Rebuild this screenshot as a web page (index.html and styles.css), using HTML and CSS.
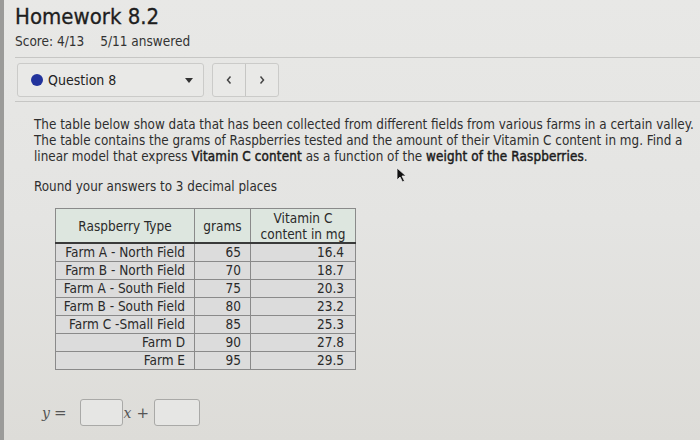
FILE: index.html
```html
<!DOCTYPE html>
<html>
<head>
<meta charset="utf-8">
<link rel="stylesheet" href="styles.css">
</head>
<body>
<div class="page">
  <header class="head">
    <h1 class="title">Homework 8.2</h1>
    <div class="score"><span>Score: 4/13</span><span>5/11 answered</span></div>
  </header>
  <div class="navbar">
    <div class="qselect">
      <span class="dot"></span>
      <span class="qlabel">Question 8</span>
      <span class="caret"></span>
    </div>
    <div class="pager">
      <span class="pbtn"><svg width="8" height="12" viewBox="0 0 8 12"><path d="M5.5 2.5 L2.5 6 L5.5 9.5" fill="none" stroke="#444" stroke-width="1.5"/></svg></span>
      <span class="pbtn"><svg width="8" height="12" viewBox="0 0 8 12"><path d="M2.5 2.5 L5.5 6 L2.5 9.5" fill="none" stroke="#444" stroke-width="1.5"/></svg></span>
    </div>
  </div>
  <main class="question">
    <p class="text">The table below show data that has been collected from different fields from various farms in a certain valley. The table contains the grams of Raspberries tested and the amount of their Vitamin C content in mg. Find a linear model that express <strong class="em">Vitamin C content</strong> as a function of the <strong class="em">weight of the Raspberries</strong>.</p>
    <p class="round">Round your answers to 3 decimal places</p>
    <table class="data">
      <thead>
        <tr><th class="c1">Raspberry Type</th><th class="c2">grams</th><th class="c3">Vitamin C<br>content in mg</th></tr>
      </thead>
      <tbody>
        <tr><td>Farm A - North Field</td><td>65</td><td>16.4</td></tr>
        <tr><td>Farm B - North Field</td><td>70</td><td>18.7</td></tr>
        <tr><td>Farm A - South Field</td><td>75</td><td>20.3</td></tr>
        <tr><td>Farm B - South Field</td><td>80</td><td>23.2</td></tr>
        <tr><td>Farm C -Small Field</td><td>85</td><td>25.3</td></tr>
        <tr><td>Farm D</td><td>90</td><td>27.8</td></tr>
        <tr><td>Farm E</td><td>95</td><td>29.5</td></tr>
      </tbody>
    </table>
    <div class="equation">
      <span class="math">y</span><span class="op">=</span>
      <span class="box b1"></span>
      <span class="math x">x</span><span class="op plus">+</span>
      <span class="box b2"></span>
    </div>
  </main>
  <svg class="cursor" width="12" height="16" viewBox="0 0 12 16"><path d="M1 1 L1 13 L4 10 L6.5 15 L8.5 14 L6 9 L10 9 Z" fill="#111" stroke="#eee" stroke-width="0.8"/></svg>
</div>
</body>
</html>
```
FILE: styles.css
```css
html, body {
  margin: 0;
  padding: 0;
}
body {
  width: 700px;
  height: 440px;
  overflow: hidden;
  background: linear-gradient(180deg, #e8e8e6 0%, #e4e4e2 50%, #dddcd8 100%);
  font-family: "DejaVu Sans Condensed", "DejaVu Sans", sans-serif;
  color: #2b2b2b;
}
.page {
  position: relative;
  height: 440px;
  border-left: 4px solid #9b9b99;
  box-sizing: border-box;
}
.head {
  padding: 3px 0 0 11px;
}
.title {
  margin: 0;
  font-size: 22px;
  font-weight: normal;
  line-height: 28px;
  color: #1e1e1e;
  -webkit-text-stroke: 0.3px #1e1e1e;
}
.score {
  display: flex;
  gap: 16px;
  font-size: 13.5px;
  line-height: 21px;
  color: #333;
  padding-bottom: 5px;
  border-bottom: 1px solid #c6c6c4;
}
.navbar {
  display: flex;
  gap: 8px;
  margin-left: 11px;
  padding: 5px 0 4px 2px;
  border-bottom: 1px solid #c6c6c4;
}
.qselect {
  width: 187px;
  height: 34px;
  box-sizing: border-box;
  border: 1px solid #cbcbc9;
  border-radius: 3px;
  background: #e9e9e7;
  display: flex;
  align-items: center;
  padding-left: 13px;
}
.dot {
  width: 12px;
  height: 12px;
  border-radius: 50%;
  background: #22339c;
}
.qlabel {
  margin-left: 5px;
  font-size: 14px;
  color: #222;
}
.caret {
  margin-left: auto;
  margin-right: 10px;
  width: 0;
  height: 0;
  border-left: 4px solid transparent;
  border-right: 4px solid transparent;
  border-top: 5px solid #333;
}
.pager {
  display: flex;
  height: 34px;
  box-sizing: border-box;
  border: 1px solid #cbcbc9;
  border-radius: 3px;
  background: #e9e9e7;
}
.pbtn {
  width: 32px;
  display: flex;
  align-items: center;
  justify-content: center;
}
.pbtn + .pbtn {
  border-left: 1px solid #c6c6c4;
}
.question {
  padding-left: 30px;
}
.text {
  margin: 15px 0 0;
  font-size: 13.35px;
  line-height: 16px;
  color: #2e2e2e;
  width: 666px;
}
.em {
  font-weight: normal;
  color: #1c1c1c;
  -webkit-text-stroke: 0.45px #1c1c1c;
  letter-spacing: 0.15px;
}
.round {
  margin: 14px 0 0;
  font-size: 13.35px;
  line-height: 16px;
  color: #2e2e2e;
}
.data {
  margin: 13px 0 0 21px;
  border-collapse: collapse;
  font-size: 13.5px;
  color: #2a2a2a;
  border: 1px solid #7c7c7c;
}
.data th {
  background: #dde6df;
  font-weight: normal;
  height: 33px;
  line-height: 16px;
  border: 1px solid #8a8a8a;
  border-bottom: 2px solid #3a3a3a;
  padding: 0;
}
.data .c1 { width: 138px; }
.data .c2 { width: 55px; }
.data .c3 { width: 104px; }
.data td {
  background: #dcdcdc;
  height: 17px;
  line-height: 17px;
  padding: 0 9px 0 4px;
  border: 1px solid #8a8a8a;
  text-align: right;
}
.data td:first-child {
  padding-right: 9px;
}
.data td:last-child {
  padding-right: 11px;
}
.equation {
  display: flex;
  align-items: center;
  margin: 29px 0 0 8px;
  font-family: "DejaVu Serif", "Liberation Serif", serif;
  color: #555;
}
.math {
  font-style: italic;
  font-size: 14px;
}
.op {
  font-size: 15px;
  margin-left: 4px;
}
.box {
  width: 43px;
  height: 27px;
  box-sizing: border-box;
  border: 1px solid #a9a9a7;
  border-radius: 3px;
  background: #e6e6e4;
}
.b1 { margin-left: 13px; }
.b2 { margin-left: 5px; width: 46px; }
.x { margin-left: 1px; }
.plus { margin-left: 5px; }
.cursor {
  position: absolute;
  left: 392px;
  top: 167px;
}
```
